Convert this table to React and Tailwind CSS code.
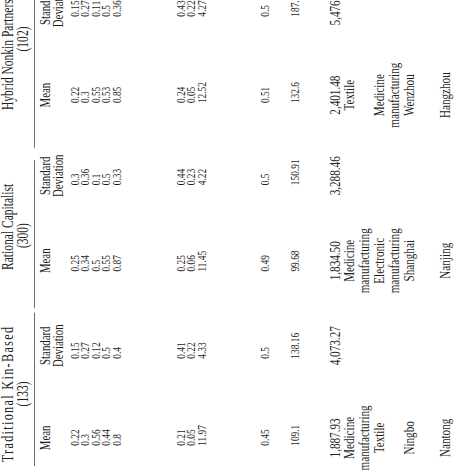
import React from 'react';

// The table is laid out upright, then squeezed horizontally and turned a quarter turn,
// as in the scanned page.
const groups = [
  {
    name: 'Traditional Kin-Based',
    n: '(133)',
    cls: 'w-[222px]',
    nameCls: 'text-[17px] tracking-[1.8px]',
    nCls: '',
  },
  { name: 'Rational Capitalist', n: '(300)', cls: 'w-[242px]', nameCls: '', nCls: 'pr-[24px]' },
  { name: 'Hybrid Nonkin Partnership', n: '(102)', cls: 'w-[280px]', nameCls: 'pr-[23px]', nCls: '' },
];

const columns = [
  {
    box: 'w-[100px]',
    pad: 'pl-[39px]',
    head: ['Mean'],
    a: ['0.22', '0.3', '0.56', '0.44', '0.8'],
    b: ['0.21', '0.05', '11.97'],
    c: '0.45',
    d: '109.1',
    e: '1,887.93',
    ind1: ['Medicine', 'manufacturing'],
    ind2: ['Textile'],
    city1: 'Ningbo',
    city2: 'Nantong',
  },
  {
    box: 'ml-[22px] w-[112px]',
    pad: 'pl-[38px]',
    head: ['Standard', 'Deviation'],
    a: ['0.15', '0.27', '0.12', '0.5', '0.4'],
    b: ['0.41', '0.22', '4.33'],
    c: '0.5',
    d: '138.16',
    e: '4,073.27',
    ind1: [],
    ind2: [],
    city1: '',
    city2: '',
  },
  {
    box: 'ml-[6px] w-[112px]',
    pad: 'pl-[41px]',
    head: ['Mean'],
    a: ['0.25', '0.34', '0.5', '0.55', '0.87'],
    b: ['0.25', '0.06', '11.45'],
    c: '0.49',
    d: '99.68',
    e: '1,834.50',
    ind1: ['Medicine', 'manufacturing'],
    ind2: ['Electronic', 'manufacturing'],
    city1: 'Shanghai',
    city2: 'Nanjing',
  },
  {
    box: 'ml-[6px] w-[112px]',
    pad: 'pl-[43px]',
    head: ['Standard', 'Deviation'],
    a: ['0.3', '0.36', '0.1', '0.5', '0.33'],
    b: ['0.44', '0.23', '4.22'],
    c: '0.5',
    d: '150.91',
    e: '3,288.46',
    ind1: [],
    ind2: [],
    city1: '',
    city2: '',
  },
  {
    box: 'w-[112px]',
    pad: 'pl-[45px]',
    head: ['Mean'],
    a: ['0.22', '0.3', '0.55', '0.53', '0.85'],
    b: ['0.24', '0.05', '12.52'],
    c: '0.51',
    d: '132.6',
    e: '2,401.48',
    ind1: ['Textile'],
    ind2: ['Medicine', 'manufacturing'],
    city1: 'Wenzhou',
    city2: 'Hangzhou',
  },
  {
    box: 'ml-[12px] w-[112px]',
    pad: 'pl-[41px]',
    head: ['Standard', 'Deviation'],
    a: ['0.15', '0.27', '0.11', '0.5', '0.36'],
    b: ['0.43', '0.22', '4.27'],
    c: '0.5',
    d: '187.24',
    e: '5,476.12',
    ind1: [],
    ind2: [],
    city1: '',
    city2: '',
  },
];

const Lines = ({ items }) => items.map((t, i) => <div key={i}>{t}</div>);

const Column = ({ col }) => (
  <div className={`shrink-0 flex flex-col ${col.box}`}>
    {/* sub header */}
    <div className="h-[26px] text-center text-[15px] leading-[13px] whitespace-nowrap">
      <Lines items={col.head} />
    </div>

    {/* numeric rows */}
    <div className={`text-[13px] leading-[10.5px] ${col.pad}`}>
      <div className="mt-[4.5px]">
        <Lines items={col.a} />
      </div>
      <div className="mt-[53.5px]">
        <Lines items={col.b} />
      </div>
      <div className="mt-[52.5px] h-[10.5px]">{col.c}</div>
      <div className="mt-[19.5px] h-[10.5px]">{col.d}</div>
    </div>

    {/* amount, industries, cities */}
    <div className="text-center text-[15.5px] leading-[15px] whitespace-nowrap">
      <div className="mt-[28px] h-[13px] leading-[13px]">{col.e}</div>
      <div className="h-[30px]">
        <Lines items={col.ind1} />
      </div>
      <div className="h-[30px]">
        <Lines items={col.ind2} />
      </div>
      <div className="h-[36px]">{col.city1}</div>
      <div className="h-[15px]">{col.city2}</div>
    </div>
  </div>
);

export default function App() {
  return (
    <div className="w-[474px] h-[474px] overflow-hidden bg-white flex items-center justify-center">
      <div className="shrink-0 w-[658px] h-[474px] -rotate-90 scale-x-72 font-['Liberation_Serif',serif] text-[#1e1e1e]">
        {/* group headers */}
        <div className="flex h-[30px] text-[16px] leading-[15px]">
          {groups.map((g) => (
            <div key={g.name} className={`shrink-0 text-center whitespace-nowrap ${g.cls}`}>
              <div className={g.nameCls}>{g.name}</div>
              <div className={g.nCls}>{g.n}</div>
            </div>
          ))}
        </div>

        {/* rules under group headers */}
        <div className="flex mt-[4px] h-px">
          <div className="ml-[11px] w-[213px] shrink-0 bg-[#6b6b6b]" />
          <div className="ml-[6px] w-[206px] shrink-0 bg-[#6b6b6b]" />
          <div className="ml-[17px] w-[300px] shrink-0 bg-[#6b6b6b]" />
        </div>

        {/* body */}
        <div className="flex mt-[4px]">
          {columns.map((col, i) => (
            <Column key={i} col={col} />
          ))}
        </div>
      </div>
    </div>
  );
}
